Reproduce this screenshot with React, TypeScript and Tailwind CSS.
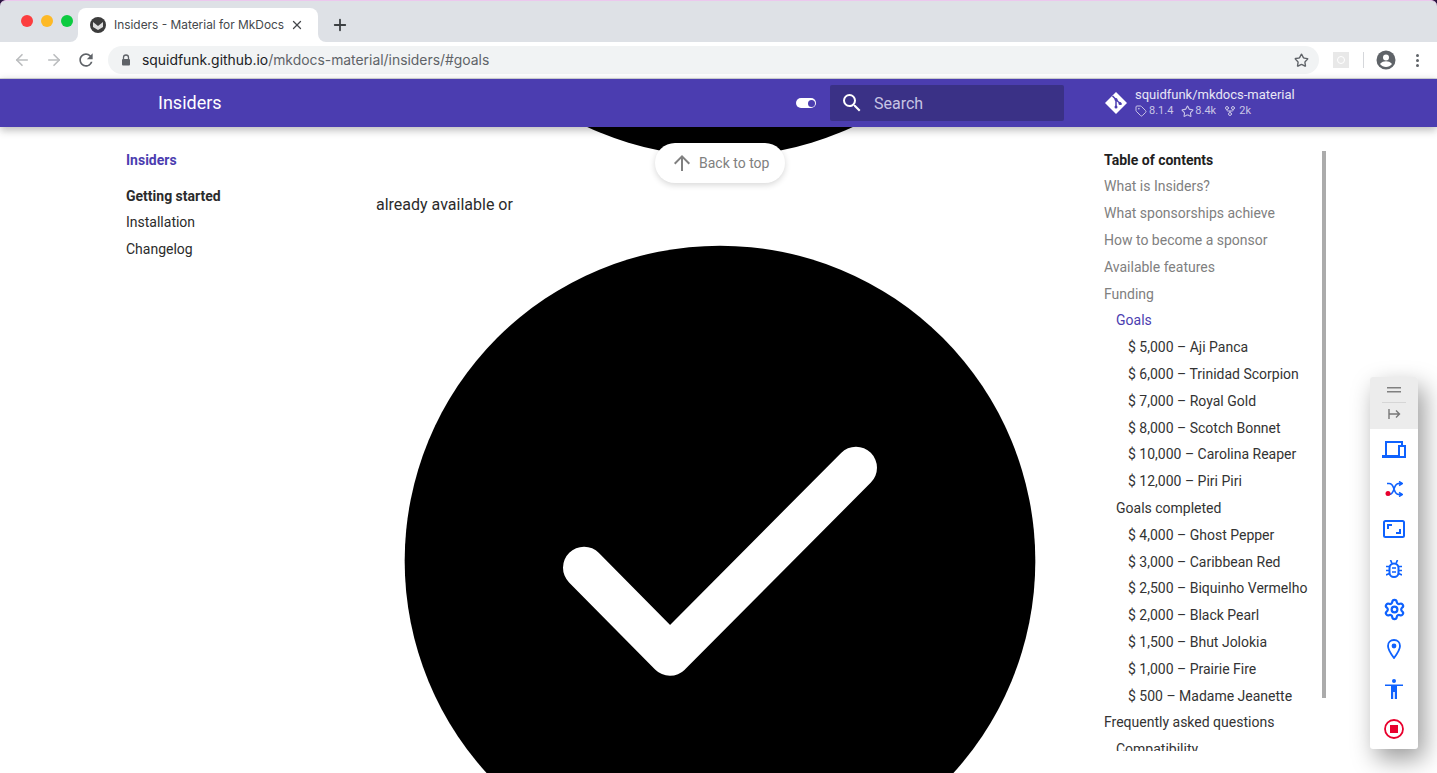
import React from 'react';
import { ArrowLeft, ArrowRight, Star, X, Plus, Tag, GitFork, Settings } from 'lucide-react';

const tocTop = ['What is Insiders?', 'What sponsorships achieve', 'How to become a sponsor', 'Available features', 'Funding'];
const goals = [
  '$ 5,000 – Aji Panca',
  '$ 6,000 – Trinidad Scorpion',
  '$ 7,000 – Royal Gold',
  '$ 8,000 – Scotch Bonnet',
  '$ 10,000 – Carolina Reaper',
  '$ 12,000 – Piri Piri',
];
const completed = [
  '$ 4,000 – Ghost Pepper',
  '$ 3,000 – Caribbean Red',
  '$ 2,500 – Biquinho Vermelho',
  '$ 2,000 – Black Pearl',
  '$ 1,500 – Bhut Jolokia',
  '$ 1,000 – Prairie Fire',
  '$ 500 – Madame Jeanette',
];

function CheckCircle() {
  return (
    <svg viewBox="0 0 24 24" className="block w-[688px] h-[688px] shrink-0">
      <circle cx="12" cy="12" r="11" fill="#000" />
      <path d="M7.256 12.233 L10.256 15.27 L16.744 8.746" fill="none" stroke="#fff" strokeWidth="1.465" strokeLinecap="round" strokeLinejoin="round" />
    </svg>
  );
}

function ToolbarIcon({ children }: { children: React.ReactNode }) {
  return <div className="w-full h-[40px] flex items-center justify-center">{children}</div>;
}

function Toolbar() {
  const blue = '#0f62fe';
  return (
    <div className="absolute left-[1370px] top-[377px] w-[48px] h-[372px] bg-white rounded-[3px] shadow-[6px_10px_24px_rgba(0,0,0,0.4)] overflow-hidden flex flex-col items-center">
      <div className="w-full h-[52px] bg-[#ececec] flex flex-col items-center">
        <svg width="14" height="8" viewBox="0 0 14 8" className="mt-[9px]">
          <path d="M0 1h14v1.6H0zM0 5h14v1.6H0z" fill="#808080" />
        </svg>
        <div className="w-[24px] h-px bg-[#d6d6d6] mt-[8px]" />
        <svg width="13" height="10" viewBox="0 0 13 10" className="mt-[6px]">
          <path d="M1 0v10M1 5h10M8 1.500 11.500 5 8 8.500" fill="none" stroke="#777" strokeWidth="1.400" />
        </svg>
      </div>
      <ToolbarIcon>
        <svg width="24" height="17" viewBox="0 0 24 17">
          <path d="M4 14V1h16v3" fill="none" stroke={blue} strokeWidth="2" />
          <path d="M0 14h16v3H0z" fill={blue} />
          <rect x="17" y="5" width="6" height="11" fill="none" stroke={blue} strokeWidth="2" />
        </svg>
      </ToolbarIcon>
      <ToolbarIcon>
        <svg width="18" height="16" viewBox="0 0 18 16">
          <path d="M2 2.500h2c3.500 0 4 2.500 5 5.500s1.500 5.500 5 5.500h3M2 13.500h2c3.500 0 4-2.500 5-5.500s1.500-5.500 5-5.500h3" fill="none" stroke={blue} strokeWidth="1.600" />
          <path d="M14 .5l3.300 2-3.300 2M14 11.500l3.300 2-3.300 2" fill="none" stroke={blue} strokeWidth="1.600" />
          <circle cx="3" cy="12.500" r="2.500" fill="#e8002d" />
        </svg>
      </ToolbarIcon>
      <ToolbarIcon>
        <svg width="22" height="18" viewBox="0 0 22 18">
          <rect x="1" y="1" width="20" height="16" rx="1.500" fill="none" stroke={blue} strokeWidth="2" />
          <path d="M5 9V5h4M17 9v4h-4" fill="none" stroke={blue} strokeWidth="2" />
        </svg>
      </ToolbarIcon>
      <ToolbarIcon>
        <svg width="16" height="18" viewBox="0 0 16 18">
          <rect x="3.500" y="3.500" width="9" height="13.500" rx="4.500" fill="none" stroke={blue} strokeWidth="2" />
          <path d="M6 8h4M6 12h4M4.500 0l1.500 3.500M11.500 0L10 3.500M0 6.500h3.500M12.500 6.500H16M0 10.500h3.500M12.500 10.500H16M0 15l3.500-1.500M16 15l-3.500-1.500" fill="none" stroke={blue} strokeWidth="1.700" />
        </svg>
      </ToolbarIcon>
      <ToolbarIcon>
        <Settings size={23} strokeWidth={2.3} color={blue} />
      </ToolbarIcon>
      <ToolbarIcon>
        <svg width="14" height="20" viewBox="0 0 14 20">
          <path d="M7 1C3.500 1 1 3.600 1 7c0 4 6 12 6 12s6-8 6-12c0-3.400-2.500-6-6-6z" fill="none" stroke={blue} strokeWidth="1.800" />
          <circle cx="7" cy="7" r="2.400" fill={blue} />
        </svg>
      </ToolbarIcon>
      <ToolbarIcon>
        <svg width="18" height="20" viewBox="0 0 18 20">
          <circle cx="9" cy="2" r="2" fill={blue} />
          <path d="M0 5.500h18v1.600h-6V20H9.800v-7H8.200v7H6V7.100H0z" fill={blue} />
        </svg>
      </ToolbarIcon>
      <ToolbarIcon>
        <svg width="20" height="20" viewBox="0 0 20 20">
          <circle cx="10" cy="10" r="9" fill="none" stroke="#e8002d" strokeWidth="1.800" />
          <rect x="6" y="6" width="8" height="8" fill="#e8002d" />
        </svg>
      </ToolbarIcon>
    </div>
  );
}

export default function App() {
  return (
    <div className="relative w-[1437px] h-[773px] overflow-hidden bg-[#2b1440] flex flex-col font-['Roboto',sans-serif]">
      {/* browser chrome */}
      <div className="h-[42px] shrink-0 bg-[#dee1e6] border-t border-[#ecc8ee] rounded-t-[6px] flex items-end relative">
        <div className="flex items-center gap-2 pl-[21px] self-start mt-[14px]">
          <span className="w-3 h-3 rounded-full bg-[#fc3d3f]" />
          <span className="w-3 h-3 rounded-full bg-[#fdb926]" />
          <span className="w-3 h-3 rounded-full bg-[#0ccb40]" />
        </div>
        <div className="relative ml-[5px] w-[240px] h-[34px] bg-white rounded-t-[8px] flex items-center pl-[12px]">
          <span className="absolute -left-[8px] bottom-0 w-[8px] h-[8px] bg-white">
            <span className="block w-full h-full bg-[#dee1e6] rounded-br-[8px]" />
          </span>
          <span className="absolute -right-[8px] bottom-0 w-[8px] h-[8px] bg-white">
            <span className="block w-full h-full bg-[#dee1e6] rounded-bl-[8px]" />
          </span>
          <span className="w-4 h-4 rounded-full bg-[#3c3c3c] flex items-center justify-center">
            <svg width="10" height="9" viewBox="0 0 10 9"><path d="M0 1l5 4 5-4v5L5 9 0 6z" fill="#ddd" /></svg>
          </span>
          <span className="ml-[8px] text-[11.900px] text-[#45484c] font-['Inter',sans-serif] whitespace-nowrap w-[176px]">Insiders - Material for MkDocs</span>
          <X size={14} strokeWidth={2.200} className="text-[#45484c]" />
        </div>
        <Plus size={18} strokeWidth={2.400} className="text-[#3c4043] ml-[13px] mb-[8px]" />
      </div>
      <div className="h-[37px] shrink-0 bg-white border-b border-[#d5d7db] flex items-center relative">
        <ArrowLeft size={18} strokeWidth={2.200} className="ml-[13px] text-[#bbbdbf]" />
        <ArrowRight size={18} strokeWidth={2.200} className="ml-[14px] text-[#bbbdbf]" />
        <svg width="20" height="20" viewBox="0 0 24 24" className="ml-[13px]">
          <path d="M17.65 6.35A7.958 7.958 0 0 0 12 4c-4.420 0-7.990 3.580-7.990 8s3.570 8 7.990 8c3.730 0 6.840-2.550 7.730-6h-2.080A5.990 5.990 0 0 1 12 18c-3.310 0-6-2.690-6-6s2.690-6 6-6c1.660 0 3.140.69 4.220 1.780L13 11h7V4l-2.350 2.350z" fill="#5f6368" />
        </svg>
        <div className="ml-[12px] w-[1211px] h-[28px] bg-[#f1f3f4] rounded-full flex items-center pl-[12px] pr-[10px]">
          <svg width="12" height="12" viewBox="0 0 12 12" className="shrink-0">
            <path d="M3.500 5V3.500a2.500 2.500 0 0 1 5 0V5" fill="none" stroke="#5f6368" strokeWidth="1.300" />
            <rect x="2" y="5" width="8" height="6.500" rx="1" fill="#5f6368" />
          </svg>
          <span className="ml-[10px] text-[13.900px] whitespace-nowrap text-[#202124] font-['Inter',sans-serif]">
            squidfunk.github.io<span className="text-[#5f6368]">/mkdocs-material/insiders/#goals</span>
          </span>
          <Star size={15} strokeWidth={2.200} className="ml-auto text-[#5f6368]" />
        </div>
        <span className="ml-[14px] w-[16px] h-[16px] bg-[#e8e8e8] flex items-center justify-center">
          <span className="w-[8px] h-[8px] rounded-full border border-white" />
        </span>
        <span className="ml-[14px] w-px h-[16px] bg-[#d5d7db]" />
        <svg width="20" height="20" viewBox="0 0 20 20" className="ml-[12px]">
          <circle cx="10" cy="10" r="9.500" fill="#5f6368" />
          <circle cx="10" cy="7.500" r="3" fill="#fff" />
          <path d="M4 14c1.500-2.200 4-2.800 6-2.800s4.500.6 6 2.800c-1.500 2-3.700 3-6 3s-4.500-1-6-3z" fill="#fff" />
        </svg>
        <span className="ml-[20px] flex flex-col gap-[2px]">
          <span className="w-[3px] h-[3px] rounded-full bg-[#5f6368]" />
          <span className="w-[3px] h-[3px] rounded-full bg-[#5f6368]" />
          <span className="w-[3px] h-[3px] rounded-full bg-[#5f6368]" />
        </span>
      </div>

      {/* site header */}
      <header className="relative z-10 h-[48px] shrink-0 bg-[#4b3db0] text-white flex items-center shadow-[0_0_8px_rgba(0,0,0,0.1),0_4px_8px_rgba(0,0,0,0.2)]">
        <span className="ml-[158px] text-[18px] w-[638px] pb-[2px]">Insiders</span>
        <span className="w-[20px] h-[10px] rounded-full bg-white flex items-center justify-end pr-[1px]">
          <span className="w-[7px] h-[7px] rounded-full bg-[#4b3db0]" />
        </span>
        <div className="ml-[14px] w-[234px] h-[36px] rounded-[2px] bg-[#3a3186] flex items-center pl-[10px]">
          <svg width="24" height="24" viewBox="0 0 24 24">
            <path d="M15.500 14h-.79l-.28-.27A6.471 6.471 0 0 0 16 9.500 6.500 6.500 0 1 0 9.500 16c1.610 0 3.090-.59 4.230-1.570l.27.28v.79l5 4.990L20.490 19l-4.990-5zm-6 0C7.010 14 5 11.990 5 9.500S7.010 5 9.500 5 14 7.010 14 9.500 11.990 14 9.500 14z" fill="#fff" />
          </svg>
          <span className="ml-[10px] text-[16px] leading-[36px] pt-[1px] text-[#c7c4e3]">Search</span>
        </div>
        <svg width="24" height="24" viewBox="0 0 24 24" className="ml-[40px]">
          <path d="M12 1 23 12 12 23 1 12z" fill="#fff" />
          <path d="M8.500 5 14 10.500M12 8v8.500M14 10.500l3.500 3" stroke="#4b3db0" strokeWidth="1.500" fill="none" />
          <circle cx="12" cy="8.500" r="1.500" fill="#4b3db0" />
          <circle cx="12" cy="16" r="1.500" fill="#4b3db0" />
          <circle cx="16" cy="12.500" r="1.500" fill="#4b3db0" />
        </svg>
        <div className="ml-[7px] flex flex-col">
          <span className="text-[13px] leading-[16px] text-[#e8e6f5]">squidfunk/mkdocs-material</span>
          <span className="flex items-center text-[11px] leading-[16px] text-[#c9c5e6]">
            <Tag size={12} />
            <span className="ml-[2px]">8.1.4</span>
            <Star size={13} className="ml-[8px]" />
            <span className="ml-[1px]">8.4k</span>
            <GitFork size={12} className="ml-[8px]" />
            <span className="ml-[3px]">2k</span>
          </span>
        </div>
      </header>

      {/* page body, scrolled down */}
      <div className="flex-1 min-h-0 flex overflow-hidden bg-white text-[14px] text-[#2b2b2b]">
        <nav className="w-[250px] ml-[126px] shrink-0 pt-[20px]">
          <div className="h-[26px] leading-[26px] font-bold text-[#4b3db0]">Insiders</div>
          <div className="h-[26px] leading-[26px] font-bold mt-[10px]">Getting started</div>
          <div className="h-[27px] leading-[26px]">Installation</div>
          <div className="h-[27px] leading-[26px]">Changelog</div>
        </nav>
        <main className="w-[688px] shrink-0">
          <div className="-mt-[630px]">
            <CheckCircle />
          </div>
          <p className="mt-[7px] h-[25px] text-[16px] leading-[26px]">already available or</p>
          <CheckCircle />
        </main>
        <aside className="relative ml-[40px] flex-1 pt-[19.600px]">
          <div className="h-[26.800px] leading-[26px] font-bold text-[#1f1f1f]">Table of contents</div>
          {tocTop.map((t) => (
            <div key={t} className="h-[26.800px] leading-[26px] text-[#808080]">{t}</div>
          ))}
          <div className="h-[26.800px] leading-[26px] pl-[12px] text-[#4b3db0]">Goals</div>
          {goals.map((t) => (
            <div key={t} className="h-[26.800px] leading-[26px] pl-[24px] text-[#333]">{t}</div>
          ))}
          <div className="h-[26.800px] leading-[26px] pl-[12px] text-[#333]">Goals completed</div>
          {completed.map((t) => (
            <div key={t} className="h-[26.800px] leading-[26px] pl-[24px] text-[#333]">{t}</div>
          ))}
          <div className="h-[26.800px] leading-[26px] text-[#333]">Frequently asked questions</div>
          <div className="h-[15px] overflow-hidden leading-[26px] pl-[12px] text-[#333]">Compatibility</div>
          <div className="absolute left-[218px] top-[24px] w-[4px] h-[547px] bg-[#ababab]" />
        </aside>
      </div>

      {/* floating back to top button */}
      <div className="absolute z-0 left-[655px] top-[143px] w-[130px] h-[40px] rounded-full bg-white shadow-[0_2px_6px_rgba(0,0,0,0.16)] flex items-center pl-[15px] text-[#808080]">
        <svg width="24" height="24" viewBox="0 0 24 24">
          <path d="M4 12l1.410 1.410L11 7.830V20h2V7.830l5.580 5.590L20 12l-8-8-8 8z" fill="currentColor" />
        </svg>
        <span className="ml-[5px] text-[14px] whitespace-nowrap">Back to top</span>
      </div>

      <Toolbar />
    </div>
  );
}
